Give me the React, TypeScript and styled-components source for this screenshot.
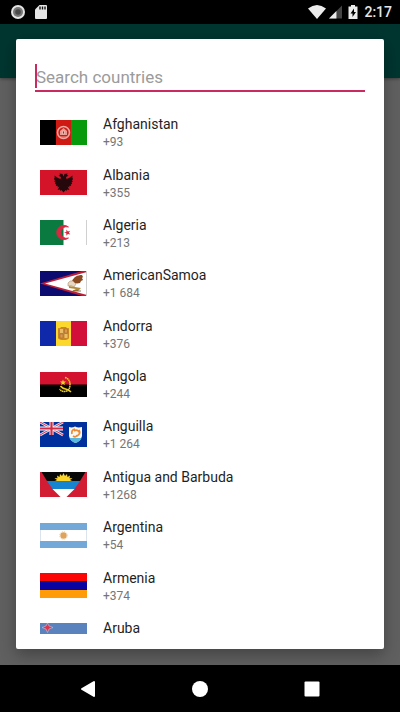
import React, { useState } from "react";
import styled, { createGlobalStyle } from "styled-components";

const GlobalStyle = createGlobalStyle`
  *, *::before, *::after { box-sizing: border-box; }
  body { margin: 0; background: #000; font-family: Roboto, "Noto Sans", sans-serif; }
`;

const Screen = styled.div`
  display: grid;
  grid-template-rows: 24px minmax(0, 1fr) 47px;
  height: 100vh;
  background: #000;
`;

const StatusBar = styled.header`
  display: flex;
  align-items: center;
  justify-content: space-between;
  padding: 0 8px 0 10px;
  color: #e6e6e6;
`;

const StatusGroup = styled.div<{ $gap: number }>`
  display: flex;
  align-items: center;
  gap: ${(p) => p.$gap}px;
`;

const Clock = styled.time`
  margin-left: 3px;
  font-size: 14px;
  line-height: 24px;
  font-weight: 500;
`;

const Stage = styled.main`
  display: grid;
  grid-template: minmax(0, 1fr) / minmax(0, 1fr);
  overflow: hidden;

  > * {
    grid-area: 1 / 1;
  }
`;

const Backdrop = styled.div`
  background: #606060;
`;

const AppBar = styled.div`
  height: 54px;
  background: #00352f;
  box-shadow: 0 1px 3px rgba(0, 0, 0, 0.4);
`;

const Dialog = styled.section`
  position: relative;
  display: flex;
  flex-direction: column;
  gap: 15px;
  margin: 15px 16px 16px;
  padding: 25px 19px 15px;
  min-height: 0;
  border-radius: 2px;
  background: #fff;
  box-shadow: 0 6px 16px rgba(0, 0, 0, 0.3);
`;

const SearchField = styled.label`
  position: relative;
  flex: none;
  display: block;
  border-bottom: 2px solid #c92a60;

  &::before {
    content: "";
    position: absolute;
    top: 0;
    left: 0;
    width: 2px;
    height: 24px;
    background: #c92a60;
  }
`;

const SearchInput = styled.input`
  display: block;
  width: 100%;
  height: 26px;
  padding: 0 0 0 1px;
  border: 0;
  outline: 0;
  background: transparent;
  color: #212121;
  caret-color: transparent;
  font: 400 17px/26px Roboto, "Noto Sans", sans-serif;

  &::placeholder {
    color: #9b9b9b;
    opacity: 1;
  }
`;

const CountryList = styled.ul`
  flex: 1;
  min-height: 0;
  display: grid;
  grid-auto-rows: calc((100% + 2px) / 10.5);
  margin: 0;
  padding: 0;
  list-style: none;
  overflow-y: auto;
  scrollbar-width: none;
`;

const CountryButton = styled.button`
  display: flex;
  align-items: center;
  gap: 16px;
  width: 100%;
  height: 100%;
  padding: 0 5px;
  border: 0;
  background: none;
  font-family: inherit;
  text-align: left;
`;

const FlagArt = styled.svg`
  flex: none;
  display: block;
  width: 47px;
  height: 25px;
`;

const Labels = styled.span`
  display: flex;
  flex-direction: column;
  min-width: 0;
`;

const Name = styled.span`
  color: #1f1f1f;
  font-size: 14px;
  line-height: 20px;
`;

const Code = styled.span`
  color: #757575;
  font-size: 12px;
  line-height: 16px;
`;

const NavBar = styled.nav`
  display: grid;
  grid-template-columns: repeat(3, 112px);
  justify-content: center;
`;

const NavButton = styled.button`
  display: grid;
  place-items: center;
  padding: 0;
  border: 0;
  background: none;
`;

const flags: Record<string, React.ReactNode> = {
  Afghanistan: (
    <>
      <path fill="#000" d="M0 0h16v25H0z" />
      <path fill="#cf1a14" d="M16 0h15v25H16z" />
      <path fill="#079a0c" d="M31 0h16v25H31z" />
      <circle cx="23.5" cy="12.5" r="6" fill="none" stroke="#eaa9a0" strokeWidth="1.6" />
      <path d="M20 15v-4l3.500-3 3.500 3v4z" fill="#e59b92" />
      <path d="M22.500 11h2v3h-2zM20 17h7" fill="#cf1a14" stroke="#f1c5bd" strokeWidth=".8" />
    </>
  ),
  Albania: (
    <>
      <path fill="#d31429" d="M0 0h47v25H0z" />
      <path
        fill="#24080b"
        d="M23.500 6.500L22.500 4l-3-.500.500 1.500-1.500.800 2.500 1.200-.500 2L18 8l-3.500-2.500.2 2L14 9l1 1.500-.800 1 1.300 1-.700 1.200 1.500.800-.500 1.500 2-.200-.300 1.700 2-1-2 3.500 2.500-.500.500 1.500 1-1 2 2.500 2-2.500 1 1 .5-1.500 2.500.500-2-3.500 2 1-.300-1.700 2 .200-.500-1.500 1.500-.800-.700-1.200 1.300-1-.800-1 1-1.500-.7-1.500.2-2L29 8l-2.500 1-.500-2 2.500-1.200L27 5l.5-1.500-3 .500z"
      />
    </>
  ),
  Algeria: (
    <>
      <path fill="#fff" d="M0 0h47v25H0z" />
      <path fill="#0a7a40" d="M0 0h23.500v25H0z" />
      <path d="M28.500 7a7.200 7.200 0 1 0 0 11 5.800 5.800 0 1 1 0-11z" fill="#d62840" stroke="#d62840" strokeWidth=".8" />
      <path d="M24 12.500l2.300-.6.100-2.400 1.500 1.900 2.300-.7-1.300 1.900 1.300 2-2.300-.7-1.500 1.800-.1-2.400z" fill="#d62840" />
      <path d="M46.500 0v25" stroke="#d0d0d0" />
    </>
  ),
  AmericanSamoa: (
    <>
      <path fill="#0b0b70" d="M0 0h47v25H0z" />
      <path fill="#bc1f38" d="M0 12.500L42 0h5v25h-5z" />
      <path fill="#fff" d="M5 12.500L47 1v23z" />
      <path d="M32 10c2-4 5-6 10-6l1 2-1 1 1 2-2 1-1 2-3 .500-3-.500z" fill="#8b4a22" />
      <path d="M28 12q2-3 5-2l3 3-2 3-3-1.500-3 .500z" fill="#e5d8c4" stroke="#a97850" strokeWidth=".5" />
      <path d="M29 15l6 1 6 1-3 3h-6l4-2-7-1z" fill="#b38a35" />
      <path d="M33 20h8" stroke="#4b3c32" strokeWidth=".7" />
      <path d="M46.500 0v25" stroke="#cfcfcf" />
    </>
  ),
  Andorra: (
    <>
      <path fill="#1029aa" d="M0 0h16v25H0z" />
      <path fill="#fbd82b" d="M16 0h15v25H16z" />
      <path fill="#d20f38" d="M31 0h16v25H31z" />
      <path d="M18 7q2 1 3-1h5q1 2 3 1v10q-1 2-5.500 2T18 17z" fill="#c98528" />
      <path d="M20 8h3v4h-3zM24.500 13h3v4h-3z" fill="#e9bd68" />
      <path d="M24.500 8h3v4h-3zM20 13h3v4h-3z" fill="#d99a43" stroke="#a76d35" strokeWidth=".6" />
    </>
  ),
  Angola: (
    <>
      <path fill="#d2122e" d="M0 0h47v13H0z" />
      <path d="M0 12.500h47V25H0z" />
      <path d="M25 5.500q5 1.500 5 7 0 6.500-5.500 7-3 0-5-2.500" fill="none" stroke="#eccb23" strokeWidth="1.500" strokeDasharray="1.600 .4" />
      <path d="M20.500 14q2 2.500 5 3t5.500 3" fill="none" stroke="#eccb23" strokeWidth="1.700" />
      <path d="M23 7.500l.8 2 2.200.1-1.700 1.400.6 2.100-1.900-1.200-1.900 1.200.6-2.100L20 9.600l2.200-.1z" fill="#f1ce25" />
    </>
  ),
  Anguilla: (
    <>
      <path fill="#00309b" d="M0 0h47v25H0z" />
      <path d="M0 0l23 13M23 0L0 13" stroke="#e8ddec" strokeWidth="2.600" />
      <path d="M0 0l23 13M23 0L0 13" stroke="#d23a50" strokeWidth="1" />
      <path d="M11.500 0v13M0 6.500h23" stroke="#fff" strokeWidth="4" />
      <path d="M11.500 0v13M0 6.500h23" stroke="#d12c45" strokeWidth="2.200" />
      <path d="M29 5q3 1 6-.5 3 1.500 7 .5v9q-1 5-6.500 7Q30 19 29 14z" fill="#f7f8f3" />
      <path d="M29.500 16h12q-1.500 3.500-6 5-4.500-1.500-6-5z" fill="#58b8dd" />
      <path d="M32 12q-1-4 3-5M39 8q2 4-2 6M33 14q3 2 4-1M34 9q3-2 5 1" fill="none" stroke="#ee8a35" strokeWidth="1.700" />
    </>
  ),
  "Antigua and Barbuda": (
    <>
      <path fill="#d11c34" d="M0 0h47v25H0z" />
      <path fill="#080808" d="M1.500 0h44L40 9H7z" />
      <path fill="#1684cf" d="M7 9h33l-5.500 8h-22z" />
      <path fill="#fff" d="M12.500 17h22L26.500 25h-6z" />
      <path
        fill="#fbd52b"
        d="M15 9l2-1-2.500-2 3 .2L17 3.500l2.500 1.500.5-3 2 2 1.500-3L25 4l2-2 .5 3L30 3.500l-.5 2.700 3-.2L30 8l2 1z"
      />
    </>
  ),
  Argentina: (
    <>
      <path fill="#fff" d="M0 0h47v25H0z" />
      <path fill="#74a8d8" d="M0 0h47v7H0zM0 18h47v7H0z" />
      <path d="M.5 7v11M46.500 7v11" stroke="#dbe4ec" />
      <circle cx="23.500" cy="12.500" r="3.200" fill="#dfa45c" />
      <circle cx="23.500" cy="12.500" r="3.800" fill="none" stroke="#efc696" strokeDasharray="1 1" />
    </>
  ),
  Armenia: (
    <>
      <path fill="#fb0505" d="M0 0h47v8H0z" />
      <path fill="#0b03a1" d="M0 8h47v9H0z" />
      <path fill="#ff9c08" d="M0 17h47v8H0z" />
    </>
  ),
  Aruba: (
    <>
      <path fill="#5a82bd" d="M0 0h47v25H0z" />
      <path fill="#f3d644" d="M0 16h47v2H0zM0 20h47v2H0z" />
      <path d="M7.500 0L9 3l4 1.500L9 6 7.500 9.500 6 6 2 4.500 6 3z" fill="#d83850" stroke="#dfb8cc" strokeWidth=".6" />
    </>
  ),
};

const countries = [
  { name: "Afghanistan", code: "+93" },
  { name: "Albania", code: "+355" },
  { name: "Algeria", code: "+213" },
  { name: "AmericanSamoa", code: "+1 684" },
  { name: "Andorra", code: "+376" },
  { name: "Angola", code: "+244" },
  { name: "Anguilla", code: "+1 264" },
  { name: "Antigua and Barbuda", code: "+1268" },
  { name: "Argentina", code: "+54" },
  { name: "Armenia", code: "+374" },
  { name: "Aruba", code: "+297" },
];

export default function App() {
  const [query, setQuery] = useState("");
  const visible = countries.filter((c) => c.name.toLowerCase().includes(query.toLowerCase()));

  return (
    <>
      <GlobalStyle />
      <Screen>
        <StatusBar>
          <StatusGroup $gap={9}>
            <svg width="16" height="16" viewBox="0 0 16 16" aria-hidden="true">
              <circle cx="8" cy="8" r="7" fill="#e4e4e4" />
              <circle cx="8" cy="8" r="5" fill="#777" />
              <circle cx="8" cy="8" r="2.800" fill="#484848" />
            </svg>
            <svg width="12" height="16" viewBox="0 0 12 16" aria-hidden="true">
              <path fill="#e6e6e6" d="M4.500 1H11q1 0 1 1v12q0 1-1 1H1q-1 0-1-1V5.500z" />
              <path d="M5 2.500v3M7.500 2.500v3M10 2.500v3" stroke="#111" strokeWidth="1.400" />
            </svg>
          </StatusGroup>
          <StatusGroup $gap={3}>
            <svg width="18" height="16" viewBox="0 0 18 16" aria-hidden="true">
              <path fill="#ececec" d="M0 4.500Q9-2.500 18 4.500L9 15z" />
            </svg>
            <svg width="13" height="16" viewBox="0 0 14 16" aria-hidden="true">
              <path fill="#454545" d="M14 1v14H0z" />
              <path fill="#ececec" d="M8 7v8H0z" />
            </svg>
            <svg width="13" height="16" viewBox="0 0 13 16" aria-hidden="true">
              <path fill="#ececec" d="M6 1h4v1.500h2.500V15h-9V2.500H6z" />
              <path fill="#000" d="M9 4.500L5.500 9.500h2V13L11 8H9z" />
            </svg>
            <Clock>2:17</Clock>
          </StatusGroup>
        </StatusBar>

        <Stage>
          <Backdrop>
            <AppBar />
          </Backdrop>
          <Dialog role="dialog" aria-label="Select a country">
            <SearchField>
              <SearchInput
                type="text"
                aria-label="Search countries"
                placeholder="Search countries"
                value={query}
                onChange={(e) => setQuery(e.target.value)}
              />
            </SearchField>
            <CountryList>
              {visible.map((c) => (
                <li key={c.name}>
                  <CountryButton type="button">
                    <FlagArt viewBox="0 0 47 25" aria-hidden="true">
                      {flags[c.name]}
                    </FlagArt>
                    <Labels>
                      <Name>{c.name}</Name>
                      <Code>{c.code}</Code>
                    </Labels>
                  </CountryButton>
                </li>
              ))}
            </CountryList>
          </Dialog>
        </Stage>

        <NavBar>
          <NavButton type="button" aria-label="Back">
            <svg width="16" height="18" viewBox="0 0 16 18" aria-hidden="true">
              <path d="M14 2v14L2 9z" fill="#fff" stroke="#fff" strokeWidth="2" strokeLinejoin="round" />
            </svg>
          </NavButton>
          <NavButton type="button" aria-label="Home">
            <svg width="16" height="16" viewBox="0 0 16 16" aria-hidden="true">
              <circle cx="8" cy="8" r="8" fill="#fff" />
            </svg>
          </NavButton>
          <NavButton type="button" aria-label="Recent apps">
            <svg width="16" height="16" viewBox="0 0 16 16" aria-hidden="true">
              <rect x=".5" y=".5" width="15" height="15" rx="1" fill="#fff" />
            </svg>
          </NavButton>
        </NavBar>
      </Screen>
    </>
  );
}
